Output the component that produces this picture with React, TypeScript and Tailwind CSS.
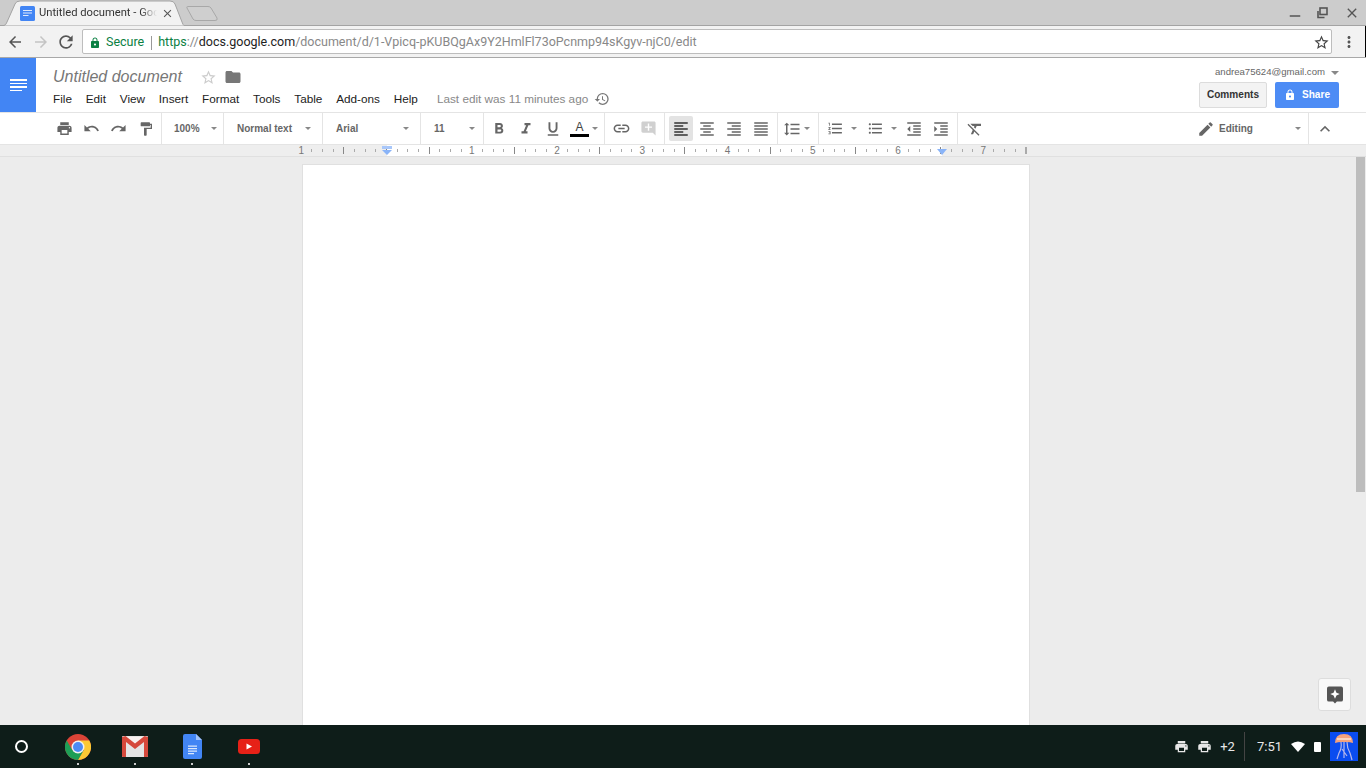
import type { ReactNode } from "react";
import {
  MdAddComment,
  MdArrowBack,
  MdArrowForward,
  MdClose,
  MdEdit,
  MdExpandLess,
  MdFolder,
  MdFormatAlignCenter,
  MdFormatAlignJustify,
  MdFormatAlignLeft,
  MdFormatAlignRight,
  MdFormatBold,
  MdFormatClear,
  MdFormatIndentDecrease,
  MdFormatIndentIncrease,
  MdFormatItalic,
  MdFormatLineSpacing,
  MdFormatListBulleted,
  MdFormatListNumbered,
  MdFormatPaint,
  MdFormatUnderlined,
  MdHistory,
  MdLink,
  MdLock,
  MdMoreVert,
  MdPrint,
  MdRedo,
  MdRefresh,
  MdRemove,
  MdStarBorder,
  MdUndo,
} from "react-icons/md";

const menus = ["File", "Edit", "View", "Insert", "Format", "Tools", "Table", "Add-ons", "Help"];

function Caret({ className = "" }: { className?: string }) {
  return <span className={`h-0 w-0 border-x-[3px] border-t-[3px] border-x-transparent border-t-[#888] ${className}`} />;
}

function Section({ width, children, className = "" }: { width: string; children: ReactNode; className?: string }) {
  return <div className={`flex h-full shrink-0 items-center border-r border-[#e4e4e4] ${width} ${className}`}>{children}</div>;
}

function Combo({ label, width, pad, caretAt }: { label: string; width: string; pad: string; caretAt: string }) {
  return (
    <Section width={width} className={pad}>
      <span className="text-[10px] font-bold text-[#666]">{label}</span>
      <Caret className={caretAt} />
    </Section>
  );
}

function Tool({ children, width = "w-[27px]" }: { children: ReactNode; width?: string }) {
  return <div className={`flex h-full shrink-0 items-center justify-center text-[#666] ${width}`}>{children}</div>;
}

function Tab() {
  return (
    <div className="relative ml-[2px] h-[26px] w-[182px] shrink-0">
      <svg className="absolute left-0 top-0" width="182" height="26" viewBox="0 0 182 26">
        <path d="M0 25.5 H2 Q4 25 5 22 L13 4 Q14 1 18 1 H168 Q172 1 173 4 L180 22 Q181 25 182 25.5" fill="#f2f2f2" stroke="#a3a3a3" />
      </svg>
      <div className="relative flex h-full items-center pl-[18px] pt-[1px]">
        <svg width="15" height="15" viewBox="0 0 15 15" className="shrink-0">
          <rect width="15" height="15" rx="1.5" fill="#4285f4" />
          <path d="M3 4.5h9M3 7h9M3 9.5h5.5" stroke="#dfe9fb" strokeWidth="1.2" />
        </svg>
        <span className="ml-[4px] w-[118px] whitespace-nowrap font-['Roboto',sans-serif] text-[11.2px] text-[#333] [mask-image:linear-gradient(to_right,black_86%,transparent)]">
          Untitled document - Goo
        </span>
        <MdClose className="ml-[4px] text-[#555]" size={13} />
      </div>
    </div>
  );
}

function NewTab() {
  return (
    <svg className="ml-[2px] mt-[5px]" width="32" height="17" viewBox="0 0 32 17">
      <path d="M1.5 1.5 H22 Q24 1.5 25 3 L31 13 Q32 15.5 29 15.5 H10 Q8 15.5 7 14 L1 3 Q.5 1.5 1.5 1.5Z" fill="#cfcfcf" stroke="#a8a8a8" />
    </svg>
  );
}

function TabStrip() {
  return (
    <div className="flex h-[26px] shrink-0 border-b border-[#a3a3a3] bg-[#cccccc]">
      <Tab />
      <NewTab />
      <div className="ml-auto flex items-center pr-[6px] text-[#555]">
        <MdRemove size={18} className="mr-[12px] mt-[6px]" />
        <svg width="12" height="12" viewBox="0 0 12 12" className="mr-[16px]" fill="none" stroke="#555" strokeWidth="1.6">
          <rect x="4" y="1" width="7" height="6.5" />
          <path d="M2 4v6.5h6.5" />
        </svg>
        <MdClose size={16} />
      </div>
    </div>
  );
}

function AddressBar() {
  return (
    <div className="flex h-[32px] shrink-0 items-center border-b border-[#a8a8a8] bg-[#f2f2f2] font-['Roboto',sans-serif]">
      <MdArrowBack size={18} className="ml-[6px] text-[#555]" />
      <MdArrowForward size={18} className="ml-[8px] text-[#c4c4c4]" />
      <MdRefresh size={20} className="ml-[6px] text-[#555]" />
      <div className="ml-[6px] flex h-[25px] w-[1250px] items-center rounded-[2px] border border-[#bdbdbd] bg-white pt-[2px] text-[12.5px]">
        <MdLock size={12} className="ml-[6px] text-[#0b8043]" />
        <span className="ml-[5px] text-[#0b8043]">Secure</span>
        <span className="ml-[7px] mr-[6px] h-[14px] w-px bg-[#999]" />
        <span className="text-[#0b8043]">https</span>
        <span className="text-[#888]">://</span>
        <span className="text-[#222]">docs.google.com</span>
        <span className="text-[#888]">/document/d/1-Vpicq-pKUBQgAx9Y2HmlFl73oPcnmp94sKgyv-njC0/edit</span>
        <MdStarBorder size={17} className="ml-auto mr-[1px] text-[#444]" />
      </div>
      <MdMoreVert size={18} className="ml-[8px] text-[#555]" />
      <div className="ml-auto h-full w-px bg-black" />
    </div>
  );
}

function DocsHeader() {
  return (
    <div className="flex h-[55px] shrink-0 border-b border-[#e4e4e4] bg-white">
      <div className="flex h-full w-[36px] shrink-0 flex-col items-center justify-center gap-[2px] bg-[#4285f4]">
        <span className="h-[1.5px] w-[17px] bg-white" />
        <span className="h-[1.5px] w-[17px] bg-white" />
        <span className="h-[1.5px] w-[17px] bg-white" />
        <span className="ml-[10px] h-[1.5px] w-[12px] self-start bg-white" />
      </div>
      <div className="ml-[17px] flex flex-col">
        <div className="mt-[9px] flex h-[20px] items-center">
          <span className="text-[16px] italic text-[#777]">Untitled document</span>
          <MdStarBorder size={17} className="ml-[18px] text-[#ccc]" />
          <MdFolder size={18} className="ml-[7px] text-[#777]" />
        </div>
        <div className="mt-[2px] flex h-[20px] items-center text-[11.75px] text-[#222]">
          <div className="flex gap-[13.8px]">
            {menus.map((m) => (
              <span key={m}>{m}</span>
            ))}
          </div>
          <span className="ml-[19px] text-[#888]">Last edit was 11 minutes ago</span>
          <MdHistory size={16} className="ml-[6px] text-[#777]" />
        </div>
      </div>
      <div className="ml-auto mr-[27px] flex flex-col items-end">
        <div className="mt-[8px] flex h-[13px] items-center text-[9.6px] text-[#666]">
          andrea75624@gmail.com
          <Caret className="ml-[6px] border-x-[4px] border-t-[4px]" />
        </div>
        <div className="mt-[3px] flex gap-[8px]">
          <div className="flex h-[26px] w-[68px] items-center justify-center rounded-[2px] border border-[#dcdcdc] bg-[#f3f3f3] text-[10.1px] font-bold text-[#333]">
            Comments
          </div>
          <div className="flex h-[26px] w-[64px] items-center justify-center rounded-[2px] bg-[#4d8cf5] text-[10.1px] font-bold text-white">
            <MdLock size={12} className="mr-[6px]" />
            Share
          </div>
        </div>
      </div>
    </div>
  );
}

function Toolbar() {
  return (
    <div className="flex h-[32px] shrink-0 border-b border-[#e4e4e4] bg-white">
      <Section width="w-[162px]" className="pl-[51px]">
        <Tool><MdPrint size={17} /></Tool>
        <Tool><MdUndo size={17} /></Tool>
        <Tool><MdRedo size={17} /></Tool>
        <Tool><MdFormatPaint size={16} /></Tool>
      </Section>
      <Combo label="100%" width="w-[62px]" pad="pl-[12px]" caretAt="ml-[11px]" />
      <Combo label="Normal text" width="w-[99px]" pad="pl-[13px]" caretAt="ml-[13px]" />
      <Combo label="Arial" width="w-[98px]" pad="pl-[13px]" caretAt="ml-[45px]" />
      <Combo label="11" width="w-[63px]" pad="pl-[13px]" caretAt="ml-[24px]" />
      <Section width="w-[121px]" className="pl-[1px]">
        <Tool><MdFormatBold size={18} /></Tool>
        <Tool><MdFormatItalic size={18} /></Tool>
        <Tool><MdFormatUnderlined size={18} /></Tool>
        <div className="ml-[4px] flex h-full w-[19px] flex-col items-center justify-center">
          <span className="text-[12px] leading-[13px] text-[#444]">A</span>
          <span className="h-[3px] w-[19px] bg-black" />
        </div>
        <Caret className="ml-[3px]" />
      </Section>
      <Section width="w-[60px]" className="pl-[3px]">
        <Tool><MdLink size={19} /></Tool>
        <Tool><MdAddComment size={17} className="text-[#d0d0d0]" /></Tool>
      </Section>
      <Section width="w-[113px]" className="pl-[4px]">
        <div className="flex h-[25px] w-[24px] items-center justify-center rounded-[2px] bg-[#e3e3e3] text-[#333]">
          <MdFormatAlignLeft size={18} />
        </div>
        <Tool><MdFormatAlignCenter size={18} /></Tool>
        <Tool><MdFormatAlignRight size={18} /></Tool>
        <Tool><MdFormatAlignJustify size={18} /></Tool>
      </Section>
      <Section width="w-[41px]" className="pl-[5px]">
        <MdFormatLineSpacing size={18} className="text-[#666]" />
        <Caret className="ml-[3px]" />
      </Section>
      <Section width="w-[139px]" className="pl-[8px]">
        <MdFormatListNumbered size={17} className="text-[#666]" />
        <Caret className="ml-[7px]" />
        <MdFormatListBulleted size={17} className="ml-[10px] text-[#666]" />
        <Caret className="ml-[7px]" />
        <span className="w-[3px]" />
        <Tool><MdFormatIndentDecrease size={18} /></Tool>
        <Tool><MdFormatIndentIncrease size={18} /></Tool>
      </Section>
      <Section width="w-[351px]" className="pl-[8px]">
        <MdFormatClear size={18} className="text-[#666]" />
        <MdEdit size={18} className="ml-[213px] text-[#666]" />
        <span className="ml-[4px] text-[10px] font-bold text-[#666]">Editing</span>
        <Caret className="ml-[42px]" />
      </Section>
      <MdExpandLess size={20} className="ml-[6px] self-center text-[#666]" />
    </div>
  );
}

function Ruler() {
  const cells = Array.from({ length: 69 }, (_, i) => i - 8);
  return (
    <div className="flex h-[12px] shrink-0 border-b border-[#e0e0e0] bg-[#eeeeee]">
      <div className="relative ml-[296px] flex">
        <div className="absolute left-[91px] top-0 h-[11px] w-[555px] bg-white" />
        {cells.map((k) => (
          <div key={k} className="relative flex h-[11px] w-[10.667px] items-center justify-center">
            {k % 8 === 0 && k !== 0 ? (
              <span className="text-[10px] leading-none text-[#777]">{k < 0 ? 1 : k / 8}</span>
            ) : k % 4 === 0 ? (
              <span className={k === 60 ? "h-[7px] w-[2px] bg-[#aaa]" : "h-[7px] w-px bg-[#888]"} />
            ) : (
              <span className="h-[3px] w-px bg-[#aaa]" />
            )}
          </div>
        ))}
        {/* indent markers */}
        <svg className="absolute left-[86px] top-[1px]" width="11" height="9" viewBox="0 0 11 9">
          <rect width="10" height="3" fill="#a8c7fa" />
          <path d="M0 4h10l-5 5z" fill="#8ab4f8" />
        </svg>
        <svg className="absolute left-[641px] top-[4px]" width="11" height="6" viewBox="0 0 11 6">
          <path d="M0 0h10l-5 6z" fill="#8ab4f8" />
        </svg>
      </div>
    </div>
  );
}

function Canvas() {
  return (
    <div className="relative flex min-h-0 flex-1 bg-[#ececec]">
      <div className="flex-1 overflow-hidden">
        <div className="ml-[302px] mt-[7px] h-[600px] w-[728px] border border-[#e0e0e0] bg-white" />
      </div>
      <div className="w-[10px] shrink-0 pr-px">
        <div className="h-[335px] bg-[#bdbdbd]" />
      </div>
      <div className="absolute left-[1318px] top-[521px] flex h-[33px] w-[33px] items-center justify-center rounded-[3px] border border-[#dddddd] bg-[#f8f8f8]">
        <svg width="16" height="18" viewBox="0 0 17 18">
          <path d="M2 0h13a2 2 0 0 1 2 2v12a2 2 0 0 1-2 2h-4.5l-2 2-2-2H2a2 2 0 0 1-2-2V2a2 2 0 0 1 2-2z" fill="#555" />
          <path d="M8.5 3 L10 6.5 L13.5 8 L10 9.5 L8.5 13 L7 9.5 L3.5 8 L7 6.5z" fill="#fff" />
        </svg>
      </div>
    </div>
  );
}

function ChromeIcon() {
  return (
    <svg width="26" height="26" viewBox="0 0 26 26">
      <circle cx="13" cy="13" r="13" fill="#db4437" />
      <path d="M13 6.5 H24.26 A13 13 0 0 1 13 26 L18.6 16.25z" fill="#fcc934" />
      <path d="M1.74 6.5 L7.37 16.25 H18.6 L13 26 A13 13 0 0 1 1.74 6.5z" fill="#1e9e56" />
      <circle cx="13" cy="13" r="6.5" fill="#f1f1f1" />
      <circle cx="13" cy="13" r="5" fill="#4c8bf5" />
    </svg>
  );
}

function GmailIcon() {
  return (
    <svg width="26" height="21" viewBox="0 0 26 21">
      <rect width="26" height="21" rx="1" fill="#e4e4e4" />
      <path d="M3 1 L13 9 L23 1z" fill="#f7f0ef" />
      <path d="M0 1 L3.5 0 L13 7.5 L22.5 0 L26 1 V20 Q26 21 25 21 H22 V6 L13 13 L4 6 V21 H1 Q0 21 0 20z" fill="#d5493c" />
    </svg>
  );
}

function DocsIcon() {
  return (
    <svg width="19" height="25" viewBox="0 0 19 25" className="ml-[1px]">
      <path d="M2 0 H13 L19 6 V23 a2 2 0 0 1-2 2 H2 a2 2 0 0 1-2-2 V2 a2 2 0 0 1 2-2z" fill="#4285f4" />
      <path d="M13 0 L19 6 H13z" fill="#a1c2fa" />
      <path d="M5 11.5h9v1.2H5zM5 14h9v1.2H5zM5 16.5h9v1.2H5zM5 19h6v1.2H5z" fill="#dce8fc" />
    </svg>
  );
}

function YoutubeIcon() {
  return (
    <svg width="22" height="15" viewBox="0 0 22 15">
      <rect width="22" height="15" rx="3.5" fill="#e62117" />
      <path d="M8.5 4.5 L14 7.5 L8.5 10.5z" fill="#fff" />
    </svg>
  );
}

function Jellyfish() {
  return (
    <svg width="28" height="29" viewBox="0 0 28 29" className="shrink-0">
      <rect width="28" height="29" fill="#0a4cf0" />
      <path d="M5 11 Q5 2 14 2 Q23 2 23 11 Q19 9.5 14 10 Q9 9.5 5 11z" fill="#f4a27c" />
      <path d="M7 7h14" stroke="#fde3cf" strokeWidth="1.5" />
      <path d="M11 10 Q12 16 9 21 Q8 24 7 27 M14 10 V26 M17 10 Q17 16 20 21 Q21 24 22 28 M12 17 L17 24" stroke="#d4c9ea" strokeWidth="1.2" fill="none" opacity="0.85" />
    </svg>
  );
}

function Launcher({ children, width }: { children: ReactNode; width: string }) {
  return (
    <div className={`relative flex h-full items-center justify-center ${width}`}>
      {children}
      <span className="absolute bottom-[3px] left-1/2 h-[2px] w-[2px] -translate-x-1/2 bg-[#ccc]" />
    </div>
  );
}

function Shelf() {
  return (
    <div className="flex h-[43px] shrink-0 items-center bg-[#0e1d19] font-['Roboto',sans-serif] text-white">
      <span className="ml-[15px] h-[13px] w-[13px] rounded-full border-2 border-white" />
      <div className="ml-[21px] flex h-full">
        <Launcher width="w-[57px]"><ChromeIcon /></Launcher>
        <Launcher width="w-[57px]"><GmailIcon /></Launcher>
        <Launcher width="w-[57px]"><DocsIcon /></Launcher>
        <Launcher width="w-[57px]"><YoutubeIcon /></Launcher>
      </div>
      <div className="ml-auto flex h-full items-center text-[#e8e8e8]">
        <MdPrint size={15} />
        <MdPrint size={15} className="ml-[8px]" />
        <span className="ml-[8px] text-[13px]">+2</span>
        <span className="ml-[9px] h-[29px] w-px bg-[#444]" />
        <span className="ml-[12px] text-[13px]">7:51</span>
        <svg width="14" height="11" viewBox="0 0 14 11" className="ml-[9px]">
          <path d="M0 3 Q7 -2 14 3 L7 11z" fill="#fff" />
        </svg>
        <span className="ml-[9px] h-[10px] w-[7px] rounded-[1px] bg-white" />
        <span className="ml-[9px]"><Jellyfish /></span>
        <span className="w-[8px]" />
      </div>
    </div>
  );
}

export default function App() {
  return (
    <div className="flex h-[768px] w-[1366px] flex-col overflow-hidden bg-white font-['Liberation_Sans',Arial,sans-serif]">
      <TabStrip />
      <AddressBar />
      <DocsHeader />
      <Toolbar />
      <Ruler />
      <Canvas />
      <Shelf />
    </div>
  );
}
